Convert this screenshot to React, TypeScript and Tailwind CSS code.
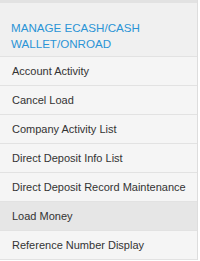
import React from "react";

const items = [
  "Account Activity",
  "Cancel Load",
  "Company Activity List",
  "Direct Deposit Info List",
  "Direct Deposit Record Maintenance",
  "Load Money",
  "Reference Number Display",
];

export default function App() {
  return (
    <div className="w-[200px] h-[261px] bg-white" style={{ fontFamily: '"Liberation Sans", Arial, sans-serif' }}>
      <div className="w-[198px] border-r border-[#dddddd] bg-[#f5f5f5]">
        <div className="h-[3px] bg-[#e2e2e2]" />
        <div className="h-[53px] bg-[#f0f0f0] pl-[11px] pt-[17px] text-[11.6px] leading-[16px] text-[#2a94d6]">
          MANAGE ECASH/CASH
          <br />
          WALLET/ONROAD
        </div>
        {items.map((it) => (
          <div
            key={it}
            className={`h-[29px] flex items-center pl-[12px] border-t border-[#e2e2e2] text-[11px] whitespace-nowrap text-[#333333] ${
              it === "Load Money" ? "bg-[#e6e6e6]" : "bg-[#f5f5f5]"
            }`}
          >
            {it}
          </div>
        ))}
        <div className="border-t border-[#e2e2e2]" />
      </div>
    </div>
  );
}
